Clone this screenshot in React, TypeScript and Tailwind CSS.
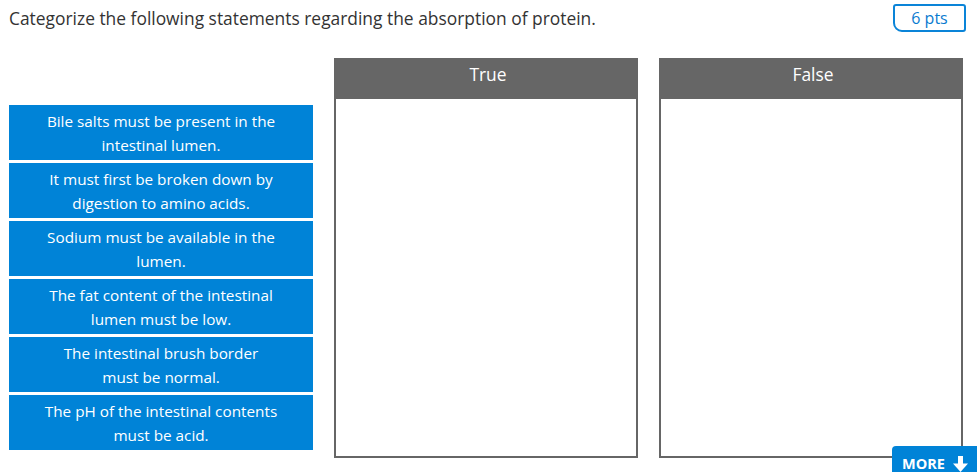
const STATEMENTS = [
  ['Bile salts must be present in the', 'intestinal lumen.'],
  ['It must first be broken down by', 'digestion to amino acids.'],
  ['Sodium must be available in the', 'lumen.'],
  ['The fat content of the intestinal', 'lumen must be low.'],
  ['The intestinal brush border', 'must be normal.'],
  ['The pH of the intestinal contents', 'must be acid.'],
];

const BINS = ['True', 'False'];

function DownArrow() {
  return (
    <svg width="15" height="16" viewBox="0 0 15 16" className="mt-[1px]">
      <rect x="5" y="0" width="5" height="9" fill="white" />
      <path d="M0 7.5 L15 7.5 L7.5 16 Z" fill="white" />
    </svg>
  );
}

export default function App() {
  return (
    <div
      className="relative w-[977px] h-[472px] overflow-hidden bg-white text-[#333]"
      style={{ fontFamily: '"Open Sans", "Noto Sans", sans-serif' }}
    >
      {/* Header */}
      <div className="flex items-start justify-between pl-[9px] pr-[11px] pt-[4px]">
        <p className="text-[17.4px] leading-[28px] text-[#333]">
          Categorize the following statements regarding the absorption of protein.
        </p>
        <div className="w-[73px] h-[28px] flex items-center justify-center border-2 border-[#0a84d8] rounded-[3px] rounded-bl-[9px] text-[16px] text-[#0a7bd0]">
          6 pts
        </div>
      </div>

      {/* Board */}
      <div className="grid grid-cols-[304px_304px_304px] gap-[21px] pl-[9px] mt-[26px]">
        <div className="flex flex-col gap-[3px] pt-[47px]">
          {STATEMENTS.map(s => (
            <div
              key={s[0]}
              className="h-[55px] bg-[#0083d7] text-white text-[15.3px] leading-[24px] text-center flex flex-col items-center justify-center"
            >
              <span>{s[0]}</span>
              <span>{s[1]}</span>
            </div>
          ))}
        </div>

        {BINS.map(b => (
          <div key={b} className="flex flex-col">
            <div className="h-[41px] bg-[#666] text-white text-[17.4px] flex items-start justify-center pt-[3px] pl-[4px]">
              {b}
            </div>
            <div className="h-[359px] border-2 border-t-0 border-[#666] bg-white" />
          </div>
        ))}
      </div>

      {/* More button */}
      <div className="absolute left-[892px] top-[446px] w-[90px] h-[30px] bg-[#0083d7] rounded-tl-[4px] flex items-start pl-[10px] pt-[9px] gap-[8px] text-white text-[14.5px] font-bold leading-[18px]">
        MORE
        <DownArrow />
      </div>
    </div>
  );
}
